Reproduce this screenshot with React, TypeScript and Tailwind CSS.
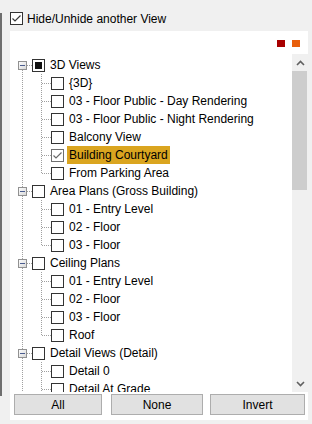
import React from "react";

type Group = { label: string; partial?: boolean; children: string[] };

const tree: Group[] = [
  {
    label: "3D Views",
    partial: true,
    children: [
      "{3D}",
      "03 - Floor Public - Day Rendering",
      "03 - Floor Public - Night Rendering",
      "Balcony View",
      "Building Courtyard",
      "From Parking Area",
    ],
  },
  { label: "Area Plans (Gross Building)", children: ["01 - Entry Level", "02 - Floor", "03 - Floor"] },
  { label: "Ceiling Plans", children: ["01 - Entry Level", "02 - Floor", "03 - Floor", "Roof"] },
  { label: "Detail Views (Detail)", children: ["Detail 0", "Detail At Grade", "Detail Section"] },
];

const checked = "Building Courtyard";

function Box({ state }: { state?: "checked" | "partial" | "dark-checked" }) {
  const gray = state === "checked";
  return (
    <div
      className={`w-[13px] h-[13px] shrink-0 bg-white border flex items-center justify-center ${
        gray ? "border-[#6f6f6f]" : "border-[#333333]"
      }`}
    >
      {state === "partial" && <div className="w-[7px] h-[7px] bg-[#111111]" />}
      {(state === "checked" || state === "dark-checked") && (
        <svg width="11" height="11" viewBox="0 0 11 11">
          <path
            d="M1.5 5.5 L4 8 L9.5 2.5"
            fill="none"
            stroke={gray ? "#6a6a6a" : "#3a3a3a"}
            strokeWidth="1.2"
          />
        </svg>
      )}
    </div>
  );
}

function RootLines({ first }: { first: boolean }) {
  return (
    <svg width="19" height="18" className="shrink-0">
      {!first && <line x1="9.5" y1="0" x2="9.5" y2="5" stroke="#a0a0a0" strokeDasharray="1 1" />}
      <line x1="9.5" y1="14" x2="9.5" y2="18" stroke="#a0a0a0" strokeDasharray="1 1" />
      <line x1="14" y1="9.5" x2="19" y2="9.5" stroke="#a0a0a0" strokeDasharray="1 1" />
      <defs>
        <linearGradient id="exp" x1="0" y1="0" x2="1" y2="1">
          <stop offset="0" stopColor="#ffffff" />
          <stop offset="1" stopColor="#d6d6d6" />
        </linearGradient>
      </defs>
      <rect x="5.5" y="5.5" width="8" height="8" fill="url(#exp)" stroke="#919191" />
      <line x1="7" y1="9.5" x2="12" y2="9.5" stroke="#4b5d8f" />
    </svg>
  );
}

function ChildLines({ last }: { last: boolean }) {
  return (
    <>
      <svg width="19" height="18" className="shrink-0">
        <line x1="9.5" y1="0" x2="9.5" y2="18" stroke="#a0a0a0" strokeDasharray="1 1" />
      </svg>
      <svg width="19" height="18" className="shrink-0">
        <line x1="9.5" y1="0" x2="9.5" y2={last ? 10 : 18} stroke="#a0a0a0" strokeDasharray="1 1" />
        <line x1="10" y1="9.5" x2="19" y2="9.5" stroke="#a0a0a0" strokeDasharray="1 1" />
      </svg>
    </>
  );
}

function Chevron({ up }: { up?: boolean }) {
  return (
    <svg width="9" height="6" viewBox="0 0 9 6">
      <polyline
        points={up ? "1,5 4.5,1.5 8,5" : "1,1 4.5,4.5 8,1"}
        fill="none"
        stroke="#606060"
        strokeWidth="1.6"
      />
    </svg>
  );
}

export default function App() {
  return (
    <div className="w-[312px] h-[424px] bg-[#f0f0f0] flex overflow-hidden text-[12px] text-black font-['Liberation_Sans',Arial,sans-serif]">
      <div className="w-[2px] mt-[13px] h-[383px] bg-[#6e6e6e] shrink-0" />
      <div className="flex flex-col pl-[8px]">
        <div className="h-[31px] pt-[12px] flex items-start gap-[4px]">
          <Box state="dark-checked" />
          <span className="leading-[14px]">Hide/Unhide another View</span>
        </div>

        <div className="w-[298px] h-[389px] bg-white flex flex-col">
          <div className="h-[23px] flex justify-end items-start pt-[9px] pr-[8px] gap-[7px]">
            <div className="w-[8px] h-[7px] bg-[#a80000]" />
            <div className="w-[8px] h-[7px] bg-[#e85f0c]" />
          </div>

          <div className="h-[338px] flex">
            <div className="flex-1 overflow-hidden pt-[2px] pl-[3px]">
              {tree.map((g, gi) => (
                <div key={g.label}>
                  <div className="h-[18px] flex items-center">
                    <RootLines first={gi === 0} />
                    <Box state={g.partial ? "partial" : undefined} />
                    <span className="ml-[3px] px-[2px] leading-[18px] whitespace-nowrap">{g.label}</span>
                  </div>
                  {g.children.map((c, ci) => (
                    <div key={c} className="h-[18px] flex items-center">
                      <ChildLines last={ci === g.children.length - 1} />
                      <Box state={c === checked ? "checked" : undefined} />
                      <span
                        className={`ml-[3px] px-[2px] h-[18px] leading-[18px] whitespace-nowrap ${
                          c === checked ? "bg-[#daa520]" : ""
                        }`}
                      >
                        {c}
                      </span>
                    </div>
                  ))}
                </div>
              ))}
            </div>

            <div className="w-[16px] bg-[#f0f0f0] flex flex-col">
              <div className="h-[17px] flex items-center justify-center">
                <Chevron up />
              </div>
              <div className="h-[119px] bg-[#cdcdcd] mr-[1px]" />
              <div className="flex-1" />
              <div className="h-[17px] flex items-center justify-center">
                <Chevron />
              </div>
            </div>
          </div>

          <div className="pt-[2px] pl-[4px] flex">
            <button className="w-[88px] h-[21px] bg-[#e1e1e1] border border-[#adadad]">All</button>
            <button className="ml-[9px] w-[92px] h-[21px] bg-[#e1e1e1] border border-[#adadad]">None</button>
            <button className="ml-[7px] w-[95px] h-[21px] bg-[#e1e1e1] border border-[#adadad]">Invert</button>
          </div>
        </div>
      </div>
    </div>
  );
}
